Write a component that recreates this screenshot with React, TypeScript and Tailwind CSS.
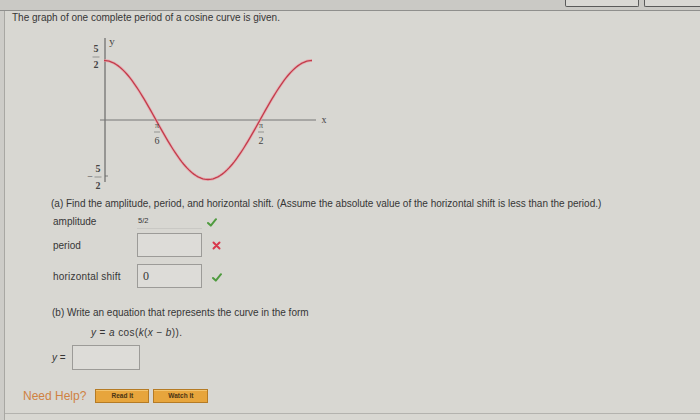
import React from "react";

function Check() {
  return (
    <svg width="10" height="9" viewBox="0 0 10 9">
      <path d="M1 5 L3.8 7.6 L9 1.2" fill="none" stroke="#4f9b3f" strokeWidth="2" strokeLinecap="round" strokeLinejoin="round" />
    </svg>
  );
}

function Cross() {
  return (
    <svg width="9" height="9" viewBox="0 0 9 9">
      <path d="M1.5 1.5 L7.5 7.5 M7.5 1.5 L1.5 7.5" fill="none" stroke="#d8384c" strokeWidth="2" strokeLinecap="round" />
    </svg>
  );
}

function Graph() {
  const pts: string[] = [];
  for (let i = 0; i <= 120; i++) {
    const t = i / 120;
    const x = 105 + t * 208;
    const y = 120 - 59.5 * Math.cos(2 * Math.PI * t);
    pts.push(`${i === 0 ? "M" : "L"}${x.toFixed(2)} ${y.toFixed(2)}`);
  }
  const d = pts.join(" ");
  const serif = "'Liberation Serif', 'DejaVu Serif', serif";
  return (
    <svg width="260" height="160" viewBox="80 34 260 160" className="block">
      <line x1="106" y1="38" x2="106" y2="182" stroke="#555" strokeWidth="1" />
      <line x1="106" y1="176" x2="109" y2="176" stroke="#666" strokeWidth="0.8" />
      <line x1="101" y1="120" x2="317" y2="120" stroke="#777" strokeWidth="1" />
      <path d={d} fill="none" stroke="#eba3aa" strokeWidth="3" opacity="0.7" />
      <path d={d} fill="none" stroke="#c23c4b" strokeWidth="1.3" />
      <g fontFamily={serif} fill="#444" textAnchor="middle">
        <text x="325" y="123" fontSize="10">x</text>
        <text x="113" y="45" fontSize="11">y</text>
        <text x="97" y="52" fontSize="10" fontWeight="bold">5</text>
        <line x1="93.5" y1="57" x2="100.5" y2="57" stroke="#777" strokeWidth="0.7" />
        <text x="97" y="68" fontSize="10" fontWeight="bold">2</text>

        <text x="158" y="128" fontSize="8">π</text>
        <line x1="155" y1="132" x2="161" y2="132" stroke="#777" strokeWidth="0.7" />
        <text x="158" y="144" fontSize="10">6</text>
        <text x="262" y="128" fontSize="8">π</text>
        <line x1="259" y1="132" x2="265" y2="132" stroke="#777" strokeWidth="0.7" />
        <text x="262" y="144" fontSize="10">2</text>

        <text x="91" y="180" fontSize="10">−</text>
        <text x="99" y="172" fontSize="10" fontWeight="bold">5</text>
        <line x1="95.5" y1="177" x2="102.5" y2="177" stroke="#777" strokeWidth="0.7" />
        <text x="99" y="189" fontSize="10" fontWeight="bold">2</text>
      </g>
    </svg>
  );
}

export default function App() {
  return (
    <div className="w-[700px] h-[420px] overflow-hidden flex flex-col bg-[#d8d7d2] text-[#363636] font-['Liberation_Sans',Arial,sans-serif]">
      <div className="h-[11px] shrink-0 bg-[#cac9c5] border-b border-[#8f8f8d] flex justify-end items-start gap-[5px]">
        <div className="w-[74px] h-[7px] border border-t-0 border-[#5a5a5a] rounded-b-[2px] bg-[#d9d8d4]" />
        <div className="w-[56px] h-[7px] border border-t-0 border-r-0 border-[#5a5a5a] rounded-bl-[2px] bg-[#d9d8d4]" />
      </div>
      <div className="flex flex-1">
        <div className="w-[5px] shrink-0 bg-[#cdccc8] border-r border-[#a8a7a3]" />
        <div className="flex-1 flex flex-col">
          <div className="mt-[1px] pl-[7px] text-[10px] leading-[12px]">
            The graph of one complete period of a cosine curve is given.
          </div>
          <div className="mt-[10px] ml-[74px]">
            <Graph />
          </div>
          <div className="mt-[4px] pl-[46px] text-[10px] leading-[12px]">
            (a) Find the amplitude, period, and horizontal shift. (Assume the absolute value of the horizontal shift is less than the period.)
          </div>
          <div className="mt-[2px] pl-[48px] h-[18px] flex items-center text-[10px]">
            <div className="w-[84px]">amplitude</div>
            <div className="w-[65px] h-[16px] flex items-center text-[7.5px] pl-[1px] border-b border-[#c9c8c4]">5/2</div>
            <div className="ml-[5px] mt-[2px]"><Check /></div>
          </div>
          <div className="mt-[3px] pl-[48px] h-[24px] flex items-center text-[10px]">
            <div className="w-[84px]">period</div>
            <div className="w-[65px] h-[24px] border border-[#9c9b98] bg-[#dddcd8]" />
            <div className="ml-[10px]"><Cross /></div>
          </div>
          <div className="mt-[7px] pl-[48px] h-[24px] flex items-center text-[10px]">
            <div className="w-[84px] tracking-[0.2px]">horizontal shift</div>
            <div className="w-[65px] h-[24px] border border-[#9c9b98] bg-[#dddcd8] flex items-center pl-[5px] text-[12px] font-['Liberation_Serif',serif]">0</div>
            <div className="ml-[10px] mt-[2px]"><Check /></div>
          </div>
          <div className="mt-[19px] pl-[47px] text-[10px] leading-[12px]">
            (b) Write an equation that represents the curve in the form
          </div>
          <div className="mt-[8px] pl-[86px] text-[10px] leading-[12px] tracking-[0.4px]">
            <i>y</i> = <i>a</i> cos(<i>k</i>(<i>x</i> − <i>b</i>)).
          </div>
          <div className="mt-[6px] pl-[47px] h-[25px] flex items-center text-[10px]">
            <div className="w-[20px]"><i>y</i> =</div>
            <div className="w-[68px] h-[25px] border border-[#9c9b98] bg-[#dddcd8]" />
          </div>
          <div className="mt-[18px] pl-[18px] h-[16px] flex items-center">
            <div className="text-[12px] text-[#cf8142] mr-[9px]">Need Help?</div>
            <div className="w-[54px] h-[14px] bg-[#e7a53c] border border-[#b57b25] flex items-center justify-center text-[6.5px] font-bold text-[#4a3414] shadow-[inset_0_1px_0_#f3c46e]">Read It</div>
            <div className="ml-[4px] w-[55px] h-[14px] bg-[#e7a53c] border border-[#b57b25] flex items-center justify-center text-[6.5px] font-bold text-[#4a3414] shadow-[inset_0_1px_0_#f3c46e]">Watch It</div>
          </div>
          <div className="mt-[9px] border-t border-[#b3b2ae]" />
        </div>
      </div>
    </div>
  );
}
